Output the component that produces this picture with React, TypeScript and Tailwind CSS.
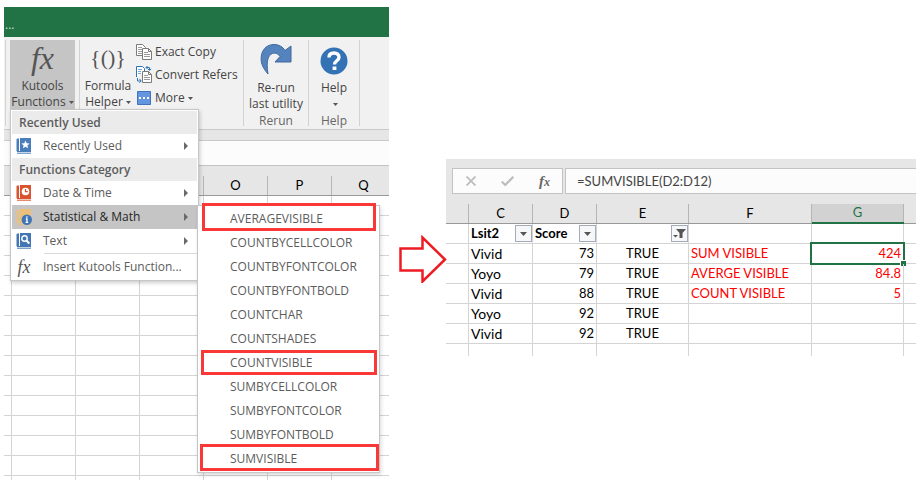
import type { ReactNode } from "react";

const books = {
  star: "#4a7ebb",
  clock: "#d9532c",
  info: "#ecc07a",
  search: "#4377b3",
};

function BookIcon({ kind }: { kind: keyof typeof books }) {
  const fill = books[kind];
  return (
    <svg width="16" height="16" viewBox="0 0 16 16" className="shrink-0" aria-hidden="true">
      <path d="M1.5 0.5H3V13H1.5C0.8 13 0.5 13.4 0.5 14V1.5Q0.5 0.5 1.5 0.5Z" fill={fill} />
      <path d="M4 0H15V13H4Z" fill={fill} />
      <path d="M1 13.5H15M1 15.2H15" stroke={fill} strokeWidth="1" />
      {kind === "star" && (
        <path d="M9.5 2.5L10.7 5.3L13.6 5.5L11.4 7.4L12.1 10.3L9.5 8.7L6.9 10.3L7.6 7.4L5.4 5.5L8.3 5.3Z" fill="#fff" />
      )}
      {kind === "clock" && (
        <>
          <circle cx="9.5" cy="6.5" r="3.8" fill="#fff" />
          <path d="M9.5 4V6.7H11.8" fill="none" stroke="#d9532c" strokeWidth="1.2" />
        </>
      )}
      {kind === "search" && (
        <>
          <circle cx="8.5" cy="5.5" r="2.7" fill="none" stroke="#fff" strokeWidth="1.4" />
          <path d="M10.5 7.5L13.3 10.5" stroke="#fff" strokeWidth="2" />
        </>
      )}
      {kind === "info" && (
        <>
          <circle cx="10.8" cy="10.8" r="5.2" fill="#3f74b5" />
          <path d="M10.9 7.2V8.7M9.8 10H11V13.4M9.6 13.4H12.2" stroke="#fff" strokeWidth="1.3" fill="none" />
        </>
      )}
    </svg>
  );
}

function Fx({ big }: { big?: boolean }) {
  return (
    <span
      aria-hidden="true"
      className={
        "font-['Liberation_Serif',serif] italic text-[#555] " +
        (big ? "block h-10 text-[32px] leading-[36px]" : "w-4 text-center text-[18px] leading-[20px]")
      }
    >
      fx
    </span>
  );
}

function Caret() {
  return (
    <svg width="5" height="3" viewBox="0 0 5 3" className="ml-[3px] inline-block align-middle" aria-hidden="true">
      <path d="M0 0H5L2.5 3Z" fill="#555" />
    </svg>
  );
}

function PageCopy() {
  return (
    <svg width="16" height="16" viewBox="0 0 16 16" aria-hidden="true">
      <path d="M0.5 0.5H6.5L9.5 3.5V11.5H0.5Z" fill="#fff" stroke="#7a7a7a" />
      <path d="M2 3.5H6M2 5.5H6M2 7.5H6M2 9.5H6" stroke="#9a9a9a" />
      <path d="M6.5 4.5H12.5L15.5 7.5V15.5H6.5Z" fill="#fff" stroke="#7a7a7a" />
      <path d="M12.5 4.5V7.5H15.5" fill="none" stroke="#7a7a7a" />
      <path d="M8 8.5H12M8 10.5H14M8 12.5H14" stroke="#9a9a9a" />
    </svg>
  );
}

function ConvertIcon() {
  return (
    <svg width="16" height="17" viewBox="0 0 16 17" aria-hidden="true">
      <path d="M0.5 11V0.5H6.5L8.5 2.5V5" fill="#fff" stroke="#2f75b5" />
      <path d="M2 3.5H6M2 5.5H5M2 7.5H5" stroke="#7aa7d6" />
      <path d="M10 1.5H13.5V4M11.8 2.8L13.5 4.5L15.2 2.8M11.5 0L10 1.5L11.5 3" fill="none" stroke="#2f75b5" />
      <path d="M1.5 12V15H5M3.5 13L5.2 15L3.5 16.7" fill="none" stroke="#2f75b5" />
      <path d="M6.5 5.5H12.5L15.5 8.5V16.5H6.5Z" fill="#fff" stroke="#7a7a7a" />
      <path d="M12.5 5.5V8.5H15.5" fill="none" stroke="#7a7a7a" />
      <path d="M8 9.5H12M8 11.5H14M8 13.5H14" stroke="#9a9a9a" />
    </svg>
  );
}

function MoreIcon() {
  return (
    <svg width="14" height="14" viewBox="0 0 14 14" aria-hidden="true">
      <path d="M0.5 0.5H13.5V13.5H0.5Z" fill="#6496e0" stroke="#3f73bd" />
      <path d="M2 6H4V8H2ZM6 6H8V8H6ZM10 6H12V8H10Z" fill="#fff" />
    </svg>
  );
}

function Separator() {
  return <div className="my-[3px] w-px shrink-0 bg-[#d2d2d2]" />;
}

const functionNames = [
  "AVERAGEVISIBLE",
  "COUNTBYCELLCOLOR",
  "COUNTBYFONTCOLOR",
  "COUNTBYFONTBOLD",
  "COUNTCHAR",
  "COUNTSHADES",
  "COUNTVISIBLE",
  "SUMBYCELLCOLOR",
  "SUMBYFONTCOLOR",
  "SUMBYFONTBOLD",
  "SUMVISIBLE",
];

const marks: Record<string, string> = {
  AVERAGEVISIBLE: "-top-1 left-1 right-[3px] h-7",
  COUNTVISIBLE: "-top-px left-[3px] right-[2px] h-[25px]",
  SUMVISIBLE: "-top-[3px] left-[2px] right-0 h-[27px]",
};

function Submenu() {
  return (
    <ul role="menu" className="absolute left-[185px] top-0 z-20 w-[183px] border border-[#c6c6c6] bg-white py-px shadow-[1px_2px_4px_rgba(0,0,0,0.15)]">
      {functionNames.map((name) => (
        <li key={name} role="none" className="relative">
          <button role="menuitem" className="block h-6 w-full pl-8 text-left leading-6 text-[#5c5c5c]">
            {name}
          </button>
          {marks[name] && <span className={"pointer-events-none absolute border-[3px] border-[#fb3838] " + marks[name]} />}
        </li>
      ))}
    </ul>
  );
}

function MenuRow({ icon, label, arrow, active }: { icon: ReactNode; label: string; arrow?: boolean; active?: boolean }) {
  return (
    <button
      role="menuitem"
      className={"flex h-6 w-full items-center pl-1 pr-[9px] text-left " + (active ? "bg-[#c5c5c5] text-[#262626]" : "text-[#5c5c5c]")}
    >
      {icon}
      <span className="ml-[11px] flex-1 whitespace-nowrap">{label}</span>
      {arrow && (
        <svg width="4" height="8" viewBox="0 0 4 8" aria-hidden="true">
          <path d="M0 0L4 4L0 8Z" fill="#6a6a6a" />
        </svg>
      )}
    </button>
  );
}

function MenuHeading({ children }: { children: ReactNode }) {
  return <div className="h-[23px] bg-[#ebebeb] pl-[7px] font-semibold leading-[23px] text-[#5c5c5c]">{children}</div>;
}

function FunctionsMenu() {
  return (
    <div role="menu" className="absolute left-0 top-full z-10 w-[189px] border border-[#c6c6c6] bg-white p-px shadow-[1px_2px_4px_rgba(0,0,0,0.2)]">
      <MenuHeading>Recently Used</MenuHeading>
      <MenuRow icon={<BookIcon kind="star" />} label="Recently Used" arrow />
      <MenuHeading>Functions Category</MenuHeading>
      <MenuRow icon={<BookIcon kind="clock" />} label="Date & Time" arrow />
      <div className="relative">
        <MenuRow icon={<BookIcon kind="info" />} label="Statistical & Math" arrow active />
        <Submenu />
      </div>
      <MenuRow icon={<BookIcon kind="search" />} label="Text" arrow />
      <div className="ml-8 h-px bg-[#dcdcdc]" />
      <div className="pt-px">
        <MenuRow icon={<Fx />} label="Insert Kutools Function..." />
      </div>
    </div>
  );
}

function Ribbon() {
  return (
    <div className="flex h-[92px] bg-[#f1f1f1] pl-px text-[#444]">
      <Separator />
      <div className="relative ml-1 mt-[3px] h-[69px] w-[65px] shrink-0">
        <button className="h-full w-full bg-[#c5c5c5] text-center leading-4">
          <Fx big />
          <span className="-mt-[2px] block">Kutools</span>
          <span className="block whitespace-nowrap">
            Functions
            <Caret />
          </span>
        </button>
        <FunctionsMenu />
      </div>
      <div className="ml-1 flex">
        <Separator />
      </div>
      <button className="mt-[3px] h-[69px] w-14 shrink-0 text-center leading-4">
        <span className="block h-[38px] whitespace-nowrap font-['Liberation_Serif',serif] text-[22px] leading-[36px] text-[#555]" aria-hidden="true">
          {"{()}"}
        </span>
        <span className="block">Formula</span>
        <span className="block whitespace-nowrap">
          Helper
          <Caret />
        </span>
      </button>
      <div className="flex w-[107px] shrink-0 flex-col pt-[3px]">
        <button className="flex h-[23px] items-center gap-[3px] whitespace-nowrap">
          <PageCopy />
          Exact Copy
        </button>
        <button className="flex h-[23px] items-center gap-[3px] whitespace-nowrap">
          <ConvertIcon />
          Convert Refers
        </button>
        <button className="flex h-[23px] items-center gap-1 whitespace-nowrap pl-px">
          <MoreIcon />
          <span>
            More
            <Caret />
          </span>
        </button>
      </div>
      <Separator />
      <div className="w-16 shrink-0 pt-1 text-center leading-4">
        <button className="block h-[72px] w-full">
          <svg width="32" height="32" viewBox="0 0 32 32" className="mx-auto mb-[5px]" aria-hidden="true">
            <path d="M8 31C3 25 0 20 1.5 12C3 5 8 1.5 14 1.5C19 1.5 23 4 25 7.5L31 3V19H15L20 13.5C18 10.5 15.5 9.5 12.5 10.5C8 12 6 18 8 31Z" fill="#5583bd" stroke="#41699c" />
          </svg>
          <span className="block">Re-run</span>
          <span className="block whitespace-nowrap">last utility</span>
        </button>
        <div className="text-[#666]">Rerun</div>
      </div>
      <Separator />
      <div className="w-[50px] shrink-0 pt-1 text-center leading-4">
        <button className="block h-[72px] w-full">
          <svg width="28" height="28" viewBox="0 0 28 28" className="mx-auto mb-[5px] mt-1" aria-hidden="true">
            <circle cx="14" cy="14" r="13.5" fill="#3272b5" />
            <path d="M9 10.5C9 7.5 11 6 14 6C17 6 19 7.7 19 10.2C19 14 14.5 13.5 14.5 17.5" fill="none" stroke="#fff" strokeWidth="3.4" />
            <path d="M12.6 19.5H16.4V23H12.6Z" fill="#fff" />
          </svg>
          <span className="block">Help</span>
          <span className="block h-4">
            <Caret />
          </span>
        </button>
        <div className="text-[#666]">Help</div>
      </div>
      <Separator />
    </div>
  );
}

function RibbonSheet() {
  return (
    <section className="mt-[7px] w-[385px] shrink-0 font-['Open_Sans','Noto_Sans',sans-serif] text-[12px]">
      <div className="h-[30px] bg-[#217346] pl-px pt-[10px] leading-4 text-[#c9dfd2]">...</div>
      <Ribbon />
      <div className="h-3 border-y border-[#c9c9c9] bg-[#e6e6e6]" />
      <div className="h-[25px] border-b border-[#c3c3c3] bg-[#fcfcfc]" />
      <div className="h-[314px] overflow-hidden">
        <table className="w-[392px] table-fixed border-separate border-spacing-0 font-['Lato',sans-serif]">
          <colgroup>
            <col className="w-2" />
            <col className="w-16" />
            <col className="w-16" />
            <col className="w-16" />
            <col className="w-16" />
            <col className="w-16" />
            <col className="w-16" />
          </colgroup>
          <thead>
            <tr>
              {["", "", "", "", "O", "P", "Q"].map((h, i) => (
                <th key={i} className="h-[30px] border-b border-[#999] bg-[#e6e6e6] p-0 font-normal text-black">
                  <span className="mt-[10px] flex h-[19px] items-center justify-center border-r border-[#b5b5b5] text-[13px]">{h}</span>
                </th>
              ))}
            </tr>
          </thead>
          <tbody>
            {Array.from({ length: 15 }, (_, r) => (
              <tr key={r}>
                {Array.from({ length: 7 }, (_, c) => (
                  <td key={c} className="h-5 border-b border-r border-[#d4d4d4] p-0" />
                ))}
              </tr>
            ))}
          </tbody>
        </table>
      </div>
    </section>
  );
}

function FilterButton({ active, label }: { active?: boolean; label: string }) {
  return (
    <button aria-label={label} className="flex size-[17px] shrink-0 items-center justify-center border border-[#a3abb8] bg-[#f6f7f9]">
      {active ? (
        <svg width="13" height="11" viewBox="0 0 13 11" aria-hidden="true">
          <path d="M3 1H13L9.5 5V10H6.5V5Z" fill="#555" />
          <path d="M0 7H5L2.5 9.5Z" fill="#555" />
        </svg>
      ) : (
        <svg width="7" height="4" viewBox="0 0 7 4" aria-hidden="true">
          <path d="M0 0H7L3.5 4Z" fill="#555" />
        </svg>
      )}
    </button>
  );
}

const rows = [
  ["Vivid", "73", "SUM VISIBLE", "424"],
  ["Yoyo", "79", "AVERGE VISIBLE", "84.8"],
  ["Vivid", "88", "COUNT VISIBLE", "5"],
  ["Yoyo", "92", "", ""],
  ["Vivid", "92", "", ""],
  ["", "", "", ""],
];

const cell = "h-5 border-b border-r border-[#d4d4d4] p-0 leading-[19px] whitespace-nowrap";

function ResultSheet() {
  return (
    <section className="mr-[5px] mt-[159px] h-[197px] min-w-0 flex-1 overflow-hidden font-['Lato',sans-serif] text-[13px] text-black">
      <div className="flex h-[35px] gap-[2px] bg-[#e6e6e6] pl-[6px] pt-[9px]">
        <div className="flex h-[26px] w-[111px] shrink-0 items-center border border-[#c3c3c3] bg-[#fcfcfc] pl-[13px] pr-3">
          <button aria-label="Cancel">
            <svg width="10" height="10" viewBox="0 0 10 10" aria-hidden="true">
              <path d="M0.5 0.5L9.5 9.5M9.5 0.5L0.5 9.5" stroke="#bdbdbd" strokeWidth="1.8" />
            </svg>
          </button>
          <button aria-label="Enter" className="ml-[25px]">
            <svg width="13" height="10" viewBox="0 0 13 10" aria-hidden="true">
              <path d="M0.7 5.5L4.2 9L12.3 0.8" fill="none" stroke="#bdbdbd" strokeWidth="2.2" />
            </svg>
          </button>
          <button aria-label="Insert function" className="ml-auto flex items-baseline font-['Liberation_Serif',serif] font-bold italic leading-5 text-[#666]">
            <span className="text-[15px]">f</span>
            <span className="text-[12px]">x</span>
          </button>
        </div>
        <input
          aria-label="Formula"
          readOnly
          value="=SUMVISIBLE(D2:D12)"
          className="h-[26px] min-w-0 flex-1 border border-r-0 border-[#c3c3c3] bg-[#fcfcfc] pl-[11px] text-[#444] outline-none"
        />
      </div>
      <table className="w-full table-fixed border-separate border-spacing-0">
        <colgroup>
          <col className="w-[23px]" />
          <col className="w-16" />
          <col className="w-16" />
          <col className="w-[92px]" />
          <col />
          <col className="w-[92px]" />
          <col className="w-3" />
        </colgroup>
        <thead>
          <tr>
            {["", "C", "D", "E", "F", "G", ""].map((h, i) => (
              <th
                key={i}
                className={"h-[30px] bg-[#e6e6e6] p-0 align-bottom font-normal " + (h === "G" ? "border-b-2 border-[#217346]" : "border-b border-[#999]")}
              >
                <span
                  className={
                    "flex items-center justify-center " +
                    (i < 6 ? "border-r border-[#b5b5b5] " : "") +
                    (h === "G" ? "h-[18px] bg-[#d2d2d2] text-[#217346]" : "h-[19px]")
                  }
                >
                  {h}
                </span>
              </th>
            ))}
          </tr>
        </thead>
        <tbody>
          <tr>
            <td className={cell} />
            <td className={cell + " pl-[2px] font-bold"}>
              <div className="flex h-[19px] items-center justify-between">
                Lsit2
                <FilterButton label="Filter Lsit2" />
              </div>
            </td>
            <td className={cell + " pl-[2px] font-bold"}>
              <div className="flex h-[19px] items-center justify-between">
                Score
                <FilterButton label="Filter Score" />
              </div>
            </td>
            <td className={cell}>
              <div className="flex h-[19px] items-center justify-end">
                <FilterButton active label="Filter column E" />
              </div>
            </td>
            <td className={cell} />
            <td className={cell} />
            <td className={cell + " border-r-0"} />
          </tr>
          {rows.map(([name, score, label, total], r) => (
            <tr key={r}>
              <td className={cell} />
              <td className={cell + " pl-[2px] text-[14px]"}>{name}</td>
              <td className={cell + " pr-[2px] text-right"}>{score}</td>
              <td className={cell + " text-center"}>{name && "TRUE"}</td>
              <td className={cell + " pl-[2px] text-[#ff0000]"}>{label}</td>
              <td className={cell + " relative pr-[2px] text-right text-[#ff0000]"}>
                {total}
                {r === 0 && (
                  <>
                    <span className="pointer-events-none absolute -inset-[2px] border-2 border-[#217346]" />
                    <span className="absolute -bottom-[3px] -right-[3px] size-[6px] border-l border-t border-white bg-[#217346]" />
                  </>
                )}
              </td>
              <td className={cell + " border-r-0"} />
            </tr>
          ))}
        </tbody>
      </table>
    </section>
  );
}

export default function App() {
  return (
    <main className="flex items-start bg-white pb-px pl-1">
      <RibbonSheet />
      <svg width="48" height="48" viewBox="0 0 48 48" className="-mr-px ml-[10px] mt-[235px] shrink-0" role="img" aria-label="Result">
        <path d="M1.5 13.5H23.5V2.5L46 24.5L23.5 46.5V35.5H1.5Z" fill="#fff" stroke="#ed1c24" strokeWidth="2.5" />
      </svg>
      <ResultSheet />
    </main>
  );
}
